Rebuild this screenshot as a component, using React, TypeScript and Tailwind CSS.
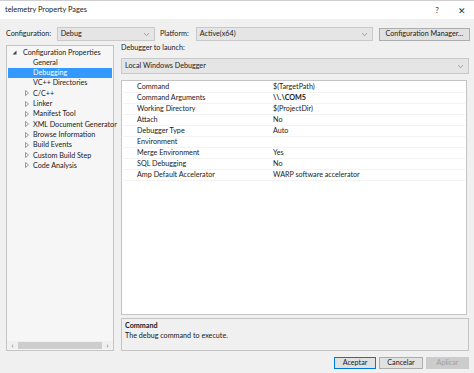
import React from 'react';

const tree = [
  { label: 'General', arrow: false },
  { label: 'Debugging', arrow: false, selected: true },
  { label: 'VC++ Directories', arrow: false },
  { label: 'C/C++', arrow: true },
  { label: 'Linker', arrow: true },
  { label: 'Manifest Tool', arrow: true },
  { label: 'XML Document Generator', arrow: true },
  { label: 'Browse Information', arrow: true },
  { label: 'Build Events', arrow: true },
  { label: 'Custom Build Step', arrow: true },
  { label: 'Code Analysis', arrow: true },
];

const props: { name: string; value: string; bold?: boolean }[] = [
  { name: 'Command', value: '$(TargetPath)' },
  { name: 'Command Arguments', value: '\\\\.\\COM5', bold: true },
  { name: 'Working Directory', value: '$(ProjectDir)' },
  { name: 'Attach', value: 'No' },
  { name: 'Debugger Type', value: 'Auto' },
  { name: 'Environment', value: '' },
  { name: 'Merge Environment', value: 'Yes' },
  { name: 'SQL Debugging', value: 'No' },
  { name: 'Amp Default Accelerator', value: 'WARP software accelerator' },
];

function Chevron() {
  return (
    <svg width="7" height="5" viewBox="0 0 7 5" className="shrink-0">
      <path d="M1 1.2 L3.5 3.6 L6 1.2" fill="none" stroke="#8a8a8a" strokeWidth="0.8" />
    </svg>
  );
}

function Dropdown({ text, className }: { text: string; className: string }) {
  return (
    <div className={`flex items-center justify-between border border-[#c9c9c9] bg-[#e5e5e5] pl-[3px] pr-[4px] ${className}`}>
      <span>{text}</span>
      <Chevron />
    </div>
  );
}

export default function App() {
  return (
    <div className="w-[474px] h-[373px] bg-[#f0f0f0] text-[7.2px] leading-none text-[#1a1a1a] flex flex-col overflow-hidden" style={{ fontFamily: 'Lato, "Noto Sans", sans-serif' }}>
      {/* title bar */}
      <div className="h-[19px] bg-white flex items-center pl-[5px] border-t border-[#cfcfcf] shrink-0 text-[7.4px]">
        <span className="flex-1">telemetry Property Pages</span>
        <span className="w-[30px] text-center text-[8px] text-[#333]">?</span>
        <span className="w-[20px] text-center text-[9px] text-[#333] mr-[2px]">✕</span>
      </div>

      {/* configuration row */}
      <div className="flex items-center h-[22px] mt-[4px] pl-[6px] pr-[4px]">
        <span className="w-[51px]">Configuration:</span>
        <Dropdown text="Debug" className="w-[99px] h-[14px]" />
        <span className="ml-[5px] w-[36px]">Platform:</span>
        <Dropdown text="Active(x64)" className="w-[178px] h-[14px]" />
        <div className="ml-[6px] w-[92px] h-[13px] border border-[#adadad] bg-[#e1e1e1] flex items-center justify-center">
          Configuration Manager...
        </div>
      </div>

      <div className="flex flex-1 pl-[6px] pr-[4px] min-h-0">
        {/* tree */}
        <div className="w-[108px] h-[306px] border border-[#c4c4c4] bg-[#f6f6f6] flex flex-col">
          <div className="flex-1 pt-[1px]">
            <div className="h-[10.3px] flex items-center pl-[5px]">
              <svg width="5" height="5" viewBox="0 0 5 5" className="mr-[6px]">
                <path d="M4.5 0.5 L4.5 4.5 L0.5 4.5 Z" fill="#444" />
              </svg>
              Configuration Properties
            </div>
            {tree.map((t) => (
              <div
                key={t.label}
                className={`h-[10.3px] flex items-center ${t.selected ? 'bg-[#3399ff] text-white mx-[1px] pl-[17px]' : 'pl-[18px]'}`}
              >
                <span className="w-[8px] shrink-0">
                  {t.arrow && (
                    <svg width="4" height="6" viewBox="0 0 4 6">
                      <path d="M0.5 0.5 L3.5 3 L0.5 5.5 Z" fill="none" stroke="#777" strokeWidth="0.7" />
                    </svg>
                  )}
                </span>
                <span className="whitespace-nowrap">{t.label}</span>
              </div>
            ))}
          </div>
          <div className="h-[8px] flex items-center bg-[#f0f0f0] mb-[1px]">
            <span className="w-[11px] text-center text-[7px] text-[#555]">‹</span>
            <div className="flex-1 h-[7px] bg-[#cdcdcd]" />
            <span className="w-[11px] text-center text-[7px] text-[#555]">›</span>
          </div>
        </div>

        {/* right */}
        <div className="flex-1 ml-[7px] flex flex-col">
          <div className="h-[9px] flex items-start -mt-[1px]">Debugger to launch:</div>
          <Dropdown text="Local Windows Debugger" className="h-[16px] mt-[5px] mr-[1px]" />

          <div className="mt-[6px] h-[235px] mr-[3px] border border-[#c4c4c4] bg-white pt-[1px] px-[1px]">
            {props.map((p) => (
              <div key={p.name} className="h-[11px] flex items-center border-b border-[#f3f3f3]">
                <span className="w-[14px] shrink-0" />
                <span className="w-[136px] shrink-0">{p.name}</span>
                <span className={p.bold ? 'font-bold' : ''}>{p.value}</span>
              </div>
            ))}
          </div>

          <div className="mt-[3px] h-[33px] mr-[1px] border border-[#c4c4c4] bg-[#f0f0f0] pl-[3px] pt-[3px] flex flex-col gap-[3px]">
            <span className="font-bold">Command</span>
            <span>The debug command to execute.</span>
          </div>

          <div className="flex justify-end gap-[3px] mt-[6px] mr-[1px]">
            <div className="w-[42px] h-[12px] border border-[#0078d7] bg-[#e1e1e1] flex items-center justify-center">Aceptar</div>
            <div className="w-[44px] h-[12px] border border-[#adadad] bg-[#e1e1e1] flex items-center justify-center">Cancelar</div>
            <div className="w-[43px] h-[12px] border border-[#cccccc] bg-[#cccccc] text-[#a0a0a0] flex items-center justify-center">Aplicar</div>
          </div>
        </div>
      </div>
    </div>
  );
}
